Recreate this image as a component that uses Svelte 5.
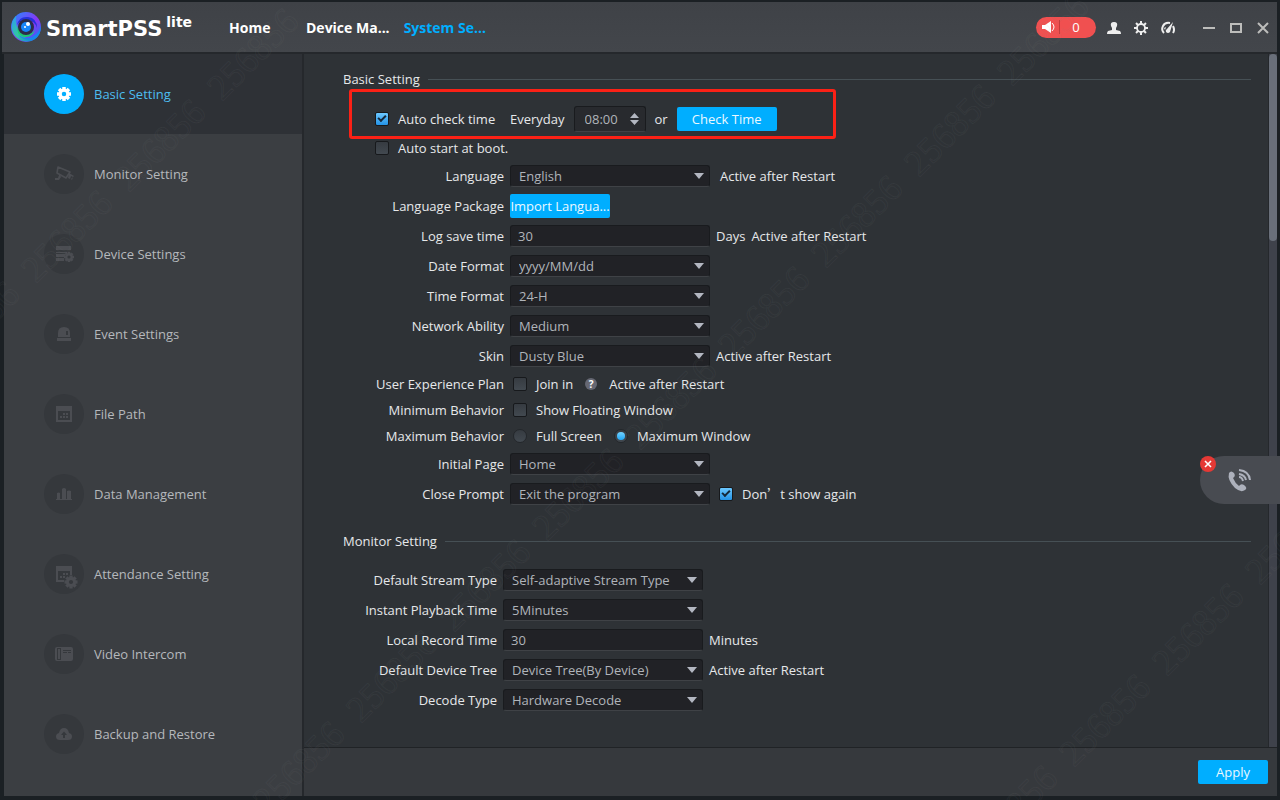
<script lang="ts">
    const tabs = ['Home', 'Device Ma...', 'System Se...'];
    const menu = [
        { text: 'Basic Setting', icon: 'gear' },
        { text: 'Monitor Setting', icon: 'camera' },
        { text: 'Device Settings', icon: 'device' },
        { text: 'Event Settings', icon: 'alarm' },
        { text: 'File Path', icon: 'calendar' },
        { text: 'Data Management', icon: 'chart' },
        { text: 'Attendance Setting', icon: 'attendance' },
        { text: 'Video Intercom', icon: 'intercom' },
        { text: 'Backup and Restore', icon: 'cloud' }
    ];

    // starting points of the diagonal user id marks
    const lines = [
        { x: -57, y: 375, count: 4 },
        { x: 268, y: 815, count: 9 },
        { x: 981, y: 859, count: 4 }
    ];
    const marks = lines.flatMap((l) =>
        Array.from({ length: l.count }, (_, i) => ({ x: l.x + i * 93, y: l.y - i * 91 }))
    );

    let selectedTab = $state('System Se...');
    let selectedMenu = $state('Basic Setting');
    let autoCheck = $state(true);
    let autoStart = $state(false);
    let joinIn = $state(false);
    let floating = $state(false);
    let maximum = $state('window');
    let dontShow = $state(true);
    let showCall = $state(true);
</script>

{#snippet gear(cx: number, cy: number, r: number)}
    <g transform="translate({cx} {cy}) scale({r / 10})">
        {#each [0, 45, 90, 135, 180, 225, 270, 315] as a}
            <rect x="-2.5" y="-10" width="5" height="5" fill="currentColor" transform="rotate({a})" />
        {/each}
        <circle r="5.5" fill="none" stroke="currentColor" stroke-width="4.6" />
    </g>
{/snippet}

{#snippet menuIcon(name: string)}
    <svg width="24" height="24" viewBox="0 0 24 24" fill="currentColor" aria-hidden="true">
        {#if name === 'gear'}
            {@render gear(12, 12, 7)}
        {:else if name === 'camera'}
            <path d="M6 5l12 5-4 6-9-5z" fill="none" stroke="currentColor" stroke-width="1.6" stroke-linejoin="round" />
            <path d="M17 11l5 3-1 1-2-1-1 3-2-1zM8 13l1 2-2 3H3v-2h3l1-3zM21 15l-1 3-1-1z" />
        {:else if name === 'device'}
            <path d="M4 4h15v4H4zM4 10h11v1H4zM4 12h9v3H4zM4 16h8v3H4z" />
            {@render gear(17, 15, 5)}
        {:else if name === 'alarm'}
            <path fill-rule="evenodd" d="M6 15v-4q0-6 6-6t6 6v4zM14 9v4h2V9z" />
            <path d="M5 16h14v3H5z" />
        {:else if name === 'calendar' || name === 'attendance'}
            {#if name === 'calendar'}
                <path fill-rule="evenodd" d="M4 4h16v16H4zM6 9v9h12V9z" />
            {:else}
                <path fill-rule="evenodd" d="M4 4h16v9h-2V9H6v9h6v2H4z" />
            {/if}
            <path d="M11 11h2v2h-2zM14 11h2v2h-2zM8 14h2v2H8zM11 14h2v2h-2z" />
            {#if name === 'calendar'}
                <path d="M14 14h2v2h-2z" />
            {:else}
                {@render gear(19, 20, 6.5)}
            {/if}
        {:else if name === 'chart'}
            <path d="M5 17v-6q2-1 3 0v6h2V7q2-2 4 0v10h1V9q2-1 4 0v8h1v1H4v-1z" />
        {:else if name === 'intercom'}
            <path fill-rule="evenodd" d="M5 5h14q2 0 2 2v10q0 2-2 2H5q-2 0-2-2V7q0-2 2-2zM5 6v12h4V6zM11 10h4v1h-4zM16 10h3v1h-3zM11 8h8v1h-8z" />
            <path d="M6 7h2v10H6z" />
        {:else}
            <path fill-rule="evenodd" d="M8 18q-4 0-4-3.500 0-3 3-3.500Q8 6 12 6t5 5q3 .5 3 3.500 0 3.500-4 3.500zM11 16h2v-3h2l-3-3.500L9 13h2z" />
        {/if}
    </svg>
{/snippet}

{#snippet select(id: string, value: string)}
    <span class="select">
        <select {id}><option>{value}</option></select>
    </span>
{/snippet}

<div class="window">
    <header>
        <div class="brand">
            <svg width="30" height="30" viewBox="0 0 30 30" aria-hidden="true">
                <defs>
                    <linearGradient id="ringA" x1="0" y1="0" x2="1" y2="1">
                        <stop offset="0" stop-color="#1e90ff" />
                        <stop offset=".55" stop-color="#8a35f5" />
                        <stop offset="1" stop-color="#1976f0" />
                    </linearGradient>
                    <linearGradient id="ringB" x1="0" y1="0" x2="1" y2="1">
                        <stop offset="0" stop-color="#2a9bf5" />
                        <stop offset=".5" stop-color="#34c7a0" />
                        <stop offset="1" stop-color="#127be8" />
                    </linearGradient>
                </defs>
                <circle cx="15" cy="15" r="15" fill="url(#ringA)" />
                <path d="M5 4A15 15 0 0 0 24 27Q14 28 9 21T5 4z" fill="url(#ringB)" />
                <path d="M24 27q6-4 6-13-3 10-12 12-7 1-11-4 5 8 17 5z" fill="#1487ee" />
                <path d="M6 13Q8 4 17 5t9 11q-2-7-9-8T6 13z" fill="#2532dc" />
                <path d="M7 13q-3 9 6 12 8 1 11-7-4 5-10 3T7 13z" fill="#1ec875" />
                <circle cx="15" cy="15" r="8" fill="#2b2d4b" />
                <circle cx="15" cy="15" r="5" fill="#1685fa" />
                <circle cx="17" cy="12" r="2" fill="#fff" />
                <circle cx="14" cy="15" r="1" fill="#fff" />
            </svg>
            <strong>SmartPSS</strong><sup>lite</sup>
        </div>

        <nav class="tabs">
            {#each tabs as tab}
                <button class:current={selectedTab === tab} onclick={() => (selectedTab = tab)}>{tab}</button>
            {/each}
        </nav>

        <button class="alert" aria-label="Alarms">
            <svg width="14" height="14" viewBox="0 0 14 14" aria-hidden="true">
                <path d="M0 5h3l6-4v12L3 9H0z" fill="#fff" />
                <path d="M10 3q4 4 0 8" fill="none" stroke="#fff" />
            </svg>
            <span>0</span>
        </button>
        <div class="tools">
            <button aria-label="User">
                <svg width="14" height="14" viewBox="0 0 14 14"><path d="M7 1q4 0 3 4L9 7v2l4 1q1 1 1 3H0q0-2 1-3l4-1V7L4 5q-1-4 3-4z" fill="currentColor" /></svg>
            </button>
            <button aria-label="Settings">
                <svg width="14" height="14" viewBox="0 0 14 14">
                    {#each [0, 45, 90, 135, 180, 225, 270, 315] as a}
                        <path d="M6 0h2v3H6z" fill="currentColor" transform="rotate({a} 7 7)" />
                    {/each}
                    <circle cx="7" cy="7" r="4" fill="none" stroke="currentColor" stroke-width="1.800" />
                </svg>
            </button>
            <button aria-label="Performance">
                <svg width="14" height="14" viewBox="0 0 14 14">
                    <path d="M3 12Q0 9 2 5t7-3M12 5q2 4 0 7" fill="none" stroke="currentColor" stroke-width="2" />
                    <path d="M12 1L9 11q-2 2-4 0-1-2 1-3zM3 7l2-1-1 3z" fill="currentColor" />
                </svg>
            </button>
        </div>
        <div class="winbtns">
            <button aria-label="Minimize"><svg width="12" height="12" viewBox="0 0 12 12"><path d="M0 6h12" stroke="currentColor" stroke-width="2" /></svg></button>
            <button aria-label="Maximize"><svg width="12" height="12" viewBox="0 0 12 12"><path d="M1 2h10v8H1z" fill="none" stroke="currentColor" stroke-width="2" /></svg></button>
            <button aria-label="Close"><svg width="12" height="12" viewBox="0 0 12 12"><path d="M1 1l10 10M11 1L1 11" stroke="currentColor" stroke-width="2" /></svg></button>
        </div>
    </header>

    <div class="body">
        <nav class="side">
            {#each menu as item}
                <button class:active={selectedMenu === item.text} onclick={() => (selectedMenu = item.text)}>
                    <i>{@render menuIcon(item.icon)}</i>
                    <span>{item.text}</span>
                </button>
            {/each}
        </nav>

        <main>
            <div class="scroll">
                <form class="settings">
                    <h2>Basic Setting</h2>
                    <div class="row check">
                        <label class="tick auto"><input type="checkbox" bind:checked={autoCheck} />Auto check time</label>
                        <label for="everyday">Everyday</label>
                        <span class="spin">
                            <input id="everyday" type="text" value="08:00" />
                            <svg width="9" height="14" viewBox="0 0 9 14" aria-hidden="true"><path d="M0 6l4.500-5L9 6zM0 8h9l-4.500 5z" fill="#b3b7c1" /></svg>
                        </span>
                        <span>or</span>
                        <button type="button" class="primary">Check Time</button>
                        <div class="highlight"></div>
                    </div>
                    <div class="row boot">
                        <label class="tick"><input type="checkbox" bind:checked={autoStart} />Auto start at boot.</label>
                    </div>
                    <div class="row">
                        <label class="name" for="language">Language</label>
                        {@render select('language', 'English')}
                        <span class="far">Active after Restart</span>
                    </div>
                    <div class="row">
                        <span class="name">Language Package</span>
                        <button type="button" class="primary">Import Langua...</button>
                    </div>
                    <div class="row">
                        <label class="name" for="log">Log save time</label>
                        <input id="log" class="field" type="text" value="30" />
                        <span>Days</span>
                        <span>Active after Restart</span>
                    </div>
                    <div class="row">
                        <label class="name" for="date">Date Format</label>
                        {@render select('date', 'yyyy/MM/dd')}
                    </div>
                    <div class="row">
                        <label class="name" for="time">Time Format</label>
                        {@render select('time', '24-H')}
                    </div>
                    <div class="row">
                        <label class="name" for="network">Network Ability</label>
                        {@render select('network', 'Medium')}
                    </div>
                    <div class="row">
                        <label class="name" for="skin">Skin</label>
                        {@render select('skin', 'Dusty Blue')}
                        <span>Active after Restart</span>
                    </div>
                    <div class="row short">
                        <span class="name">User Experience Plan</span>
                        <div class="options">
                            <label class="tick"><input type="checkbox" bind:checked={joinIn} />Join in</label>
                            <button type="button" class="help" aria-label="Help">?</button>
                            <span>Active after Restart</span>
                        </div>
                    </div>
                    <div class="row short">
                        <span class="name">Minimum Behavior</span>
                        <div class="options">
                            <label class="tick"><input type="checkbox" bind:checked={floating} />Show Floating Window</label>
                        </div>
                    </div>
                    <div class="row short">
                        <span class="name">Maximum Behavior</span>
                        <div class="options">
                            <label class="tick"><input type="radio" value="full" bind:group={maximum} />Full Screen</label>
                            <label class="tick"><input type="radio" value="window" bind:group={maximum} />Maximum Window</label>
                        </div>
                    </div>
                    <div class="row">
                        <label class="name" for="initial">Initial Page</label>
                        {@render select('initial', 'Home')}
                    </div>
                    <div class="row">
                        <label class="name" for="close">Close Prompt</label>
                        {@render select('close', 'Exit the program')}
                        <div class="options">
                            <label class="tick"><input type="checkbox" bind:checked={dontShow} /><span>Don<span class="wide" lang="zh-CN">’</span>t show again</span></label>
                        </div>
                    </div>
                </form>

                <form class="settings monitor">
                    <h2>Monitor Setting</h2>
                    <div class="row">
                        <label class="name" for="stream">Default Stream Type</label>
                        {@render select('stream', 'Self-adaptive Stream Type')}
                    </div>
                    <div class="row">
                        <label class="name" for="playback">Instant Playback Time</label>
                        {@render select('playback', '5Minutes')}
                    </div>
                    <div class="row">
                        <label class="name" for="record">Local Record Time</label>
                        <input id="record" class="field" type="text" value="30" />
                        <span>Minutes</span>
                    </div>
                    <div class="row">
                        <label class="name" for="tree">Default Device Tree</label>
                        {@render select('tree', 'Device Tree(By Device)')}
                        <span>Active after Restart</span>
                    </div>
                    <div class="row">
                        <label class="name" for="decode">Decode Type</label>
                        {@render select('decode', 'Hardware Decode')}
                    </div>
                </form>
                <div class="track"><div class="thumb"></div></div>
            </div>
            <footer>
                <button class="primary apply">Apply</button>
            </footer>
        </main>
    </div>

    {#if showCall}
        <div class="call">
            <button class="phone" aria-label="Call">
                <svg width="24" height="24" viewBox="0 0 24 24" aria-hidden="true">
                    <path d="M2 5q2-3 5 0 2 3-1 5 2 5 6 8 2-3 5-1 4 3 1 5-4 3-10-2Q0 12 2 5z" fill="#adb1bc" />
                    <path d="M12 2q10 1 11 10M12 6q6 1 7 6M12 9q3 0 4 4" fill="none" stroke="#adb1bc" stroke-width="2" />
                </svg>
            </button>
            <button class="dismiss" aria-label="Dismiss" onclick={() => (showCall = false)}>
                <svg width="8" height="8" viewBox="0 0 8 8"><path d="M1 1l6 6M7 1L1 7" stroke="#fff" stroke-width="1.600" /></svg>
            </button>
        </div>
    {/if}

    <svg class="watermark" aria-hidden="true">
        {#each marks as m}
            <text x={m.x} y={m.y} transform="rotate(-45 {m.x} {m.y})">256856</text>
        {/each}
    </svg>
</div>

<style>
    :global(body) {
        margin: 0;
        background: #1b2024;
    }

    .window {
        position: relative;
        box-sizing: border-box;
        display: flex;
        flex-direction: column;
        min-height: 100vh;
        padding: 2px 3px 3px 2px;
        overflow: hidden;
        background: #1b2024;
        color: #e6e8ea;
        font-family: 'Open Sans', 'Noto Sans', sans-serif;
        font-size: 13px;
        line-height: 18px;
    }

    button, input, select {
        font: inherit;
    }

    button {
        border: none;
        padding: 0;
        background: none;
        color: inherit;
    }

    svg {
        display: block;
        flex: none;
        overflow: visible;
    }

    header {
        display: flex;
        align-items: center;
        height: 50px;
        padding: 0 8px 0 9px;
        border-bottom: 2px solid #25282c;
        background: linear-gradient(#3f4247, #43464b);
    }

    .brand {
        display: flex;
        align-items: center;
        width: 218px;
        color: #fff;
        font-family: 'DejaVu Sans', sans-serif;
    }

    .brand strong {
        margin: 3px 4px 0 5px;
        font-size: 21px;
    }

    .brand sup {
        align-self: flex-start;
        margin-top: 3px;
        font-size: 14px;
        font-weight: bold;
        line-height: 14px;
    }

    .tabs {
        display: flex;
        flex: 1;
        gap: 14px;
        margin-top: 2px;
    }

    .tabs button {
        min-width: 63px;
        color: #fff;
        font-size: 14px;
        font-weight: bold;
        text-align: left;
    }

    .tabs button.current {
        color: #00aeff;
    }

    .alert {
        display: flex;
        align-items: center;
        width: 60px;
        height: 21px;
        padding: 0 4px 0 6px;
        border-radius: 11px;
        background: #f05050;
        color: #fff;
    }

    .alert span {
        flex: 1;
        margin-left: 3px;
        border-left: 1px solid #c33b3b;
        line-height: 14px;
    }

    .tools {
        display: flex;
        gap: 13px;
        margin: 2px 28px 0 11px;
        color: #eee;
    }

    .winbtns {
        display: flex;
        gap: 15px;
        margin-top: 2px;
        color: #bdbdbb;
    }

    .body {
        display: flex;
        flex: 1;
        padding: 0 0 1px 2px;
    }

    .side {
        flex: none;
        width: 298px;
        background: #3b3e42;
    }

    .side button {
        display: flex;
        align-items: center;
        gap: 10px;
        width: 100%;
        height: 80px;
        padding-left: 40px;
        color: #b5b8bc;
    }

    .side i {
        display: grid;
        place-items: center;
        width: 40px;
        height: 40px;
        border-radius: 50%;
        background: #35383c;
        color: #4b4d52;
    }

    .side button.active {
        background: #2e3136;
        color: #4dbdf0;
    }

    .side .active i {
        background: #00aeff;
        color: #fff;
    }

    main {
        display: flex;
        flex: 1;
        flex-direction: column;
        border-left: 2px solid #25282c;
        background: #2e3236;
    }

    .scroll {
        position: relative;
        flex: 1;
        padding: 16px 26px 24px 39px;
    }

    .track {
        position: absolute;
        top: 0;
        right: 0;
        bottom: 0;
        width: 8px;
        border-left: 1px solid #25282c;
        background: #3f424b;
    }

    .thumb {
        height: 27%;
        border-radius: 4px;
        background: #696f7a;
    }

    h2 {
        display: flex;
        align-items: center;
        gap: 8px;
        margin: 0;
        font-size: 13px;
        font-weight: normal;
    }

    h2::after {
        content: '';
        flex: 1;
        height: 1px;
        background: #465055;
    }

    .row {
        display: flex;
        align-items: center;
        gap: 6px;
        height: 30px;
        white-space: nowrap;
    }

    .short {
        height: 26px;
    }

    .check {
        position: relative;
        gap: 9px;
        margin-top: 16px;
        padding-left: 32px;
    }

    .highlight {
        position: absolute;
        top: -15px;
        left: 6px;
        box-sizing: border-box;
        width: 487px;
        height: 50px;
        border: 3px solid #fb2116;
        border-radius: 3px;
        pointer-events: none;
    }

    .boot {
        height: 27px;
        padding-left: 32px;
    }

    .name {
        width: 161px;
        text-align: right;
    }

    .monitor {
        margin-top: 23px;
    }

    .monitor h2 {
        margin-bottom: 15px;
    }

    .monitor .name {
        width: 154px;
    }

    .far {
        margin-left: 4px;
    }

    .wide {
        font-family: 'Noto Sans CJK SC', sans-serif;
        line-height: 1;
    }

    .tick {
        display: flex;
        align-items: center;
        gap: 9px;
    }

    .auto {
        min-width: 126px;
    }

    .tick input {
        box-sizing: border-box;
        display: grid;
        place-items: center;
        width: 14px;
        height: 14px;
        margin: 0;
        border: 1px solid #17191c;
        border-radius: 2px;
        appearance: none;
        background: linear-gradient(#363b41, #424950);
    }

    .tick input[type='checkbox']:checked {
        background: linear-gradient(#6cc8ff, #2493e6);
    }

    .tick input[type='checkbox']:checked::after {
        content: '';
        width: 6px;
        height: 3px;
        margin-bottom: 3px;
        border: solid #15283a;
        border-width: 0 0 2px 2px;
        transform: rotate(-45deg);
    }

    .tick input[type='radio'] {
        border-color: #24272b;
        border-radius: 50%;
    }

    .tick input[type='radio']:checked::after {
        content: '';
        width: 8px;
        height: 8px;
        border-radius: 50%;
        background: linear-gradient(#73d2ff, #20a6f5);
    }

    .options {
        display: flex;
        align-items: center;
        gap: 12px;
        margin-left: 3px;
    }

    .help {
        width: 12px;
        height: 12px;
        border-radius: 50%;
        background: #666873;
        color: #fff;
        font-size: 10px;
        font-weight: bold;
        line-height: 12px;
    }

    .select {
        position: relative;
        width: 200px;
    }

    .select::after {
        content: '';
        position: absolute;
        top: 8px;
        right: 6px;
        border: solid transparent;
        border-width: 6px 5px 0;
        border-top-color: #b3b7c1;
        pointer-events: none;
    }

    .select select, .field, .spin {
        box-sizing: border-box;
        display: block;
        width: 200px;
        height: 22px;
        padding: 0 8px;
        border: 1px solid #191b1e;
        border-bottom-color: #3f4246;
        border-radius: 3px;
        appearance: none;
        background: #212226;
        color: #b0b4ba;
    }

    .field {
        padding: 0 7px;
    }

    .spin {
        display: flex;
        align-items: center;
        justify-content: space-between;
        width: 72px;
        height: 26px;
        padding: 0 6px 0 10px;
        background: #282a2e;
    }

    .spin input {
        width: 40px;
        padding: 0;
        border: none;
        background: none;
        color: inherit;
    }

    .primary {
        width: 100px;
        height: 24px;
        border-radius: 2px;
        background: #00aeff;
        color: #eaf8ff;
    }

    footer {
        display: flex;
        align-items: center;
        justify-content: flex-end;
        height: 48px;
        padding-right: 9px;
        border-top: 1px solid #202326;
        background: #36393d;
    }

    .apply {
        width: 70px;
    }

    .call {
        position: absolute;
        top: 57%;
        right: 0;
        width: 80px;
        height: 48px;
        border-radius: 24px 0 0 24px;
        background: #484b51;
    }

    .phone {
        display: grid;
        place-items: center;
        width: 78px;
        height: 48px;
    }

    .dismiss {
        position: absolute;
        top: 0;
        left: 0;
        display: grid;
        place-items: center;
        width: 16px;
        height: 16px;
        border-radius: 50%;
        background: #e53935;
    }

    .watermark {
        position: absolute;
        inset: 0;
        width: 100%;
        height: 100%;
        pointer-events: none;
    }

    .watermark text {
        fill: none;
        stroke: #888;
        stroke-opacity: .09;
        font-family: 'Liberation Serif', serif;
        font-size: 37px;
    }
</style>
